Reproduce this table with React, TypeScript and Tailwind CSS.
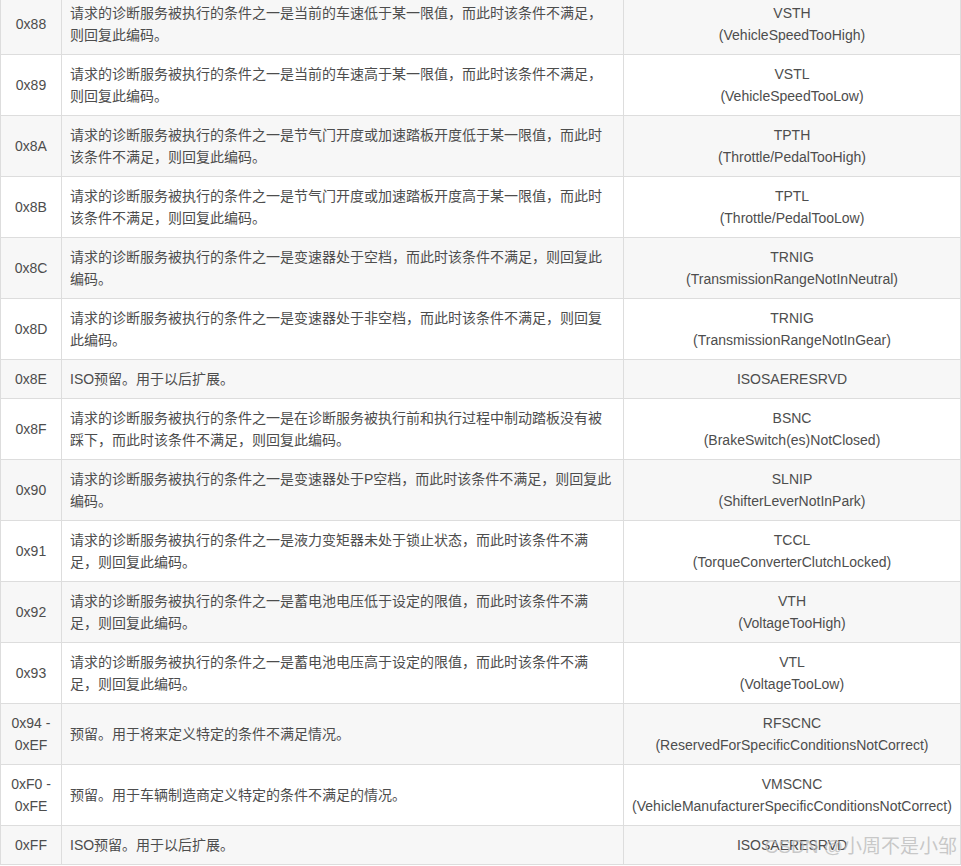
import React from 'react';

// NRC rows: code, description, mnemonic, full name
interface NrcRow {
  code: string;
  desc: string;
  short: string;
  long?: string;
}

const rows: NrcRow[] = [
  { code: '0x88', desc: '请求的诊断服务被执行的条件之一是当前的车速低于某一限值，而此时该条件不满足，则回复此编码。', short: 'VSTH', long: '(VehicleSpeedTooHigh)' },
  { code: '0x89', desc: '请求的诊断服务被执行的条件之一是当前的车速高于某一限值，而此时该条件不满足，则回复此编码。', short: 'VSTL', long: '(VehicleSpeedTooLow)' },
  { code: '0x8A', desc: '请求的诊断服务被执行的条件之一是节气门开度或加速踏板开度低于某一限值，而此时该条件不满足，则回复此编码。', short: 'TPTH', long: '(Throttle/PedalTooHigh)' },
  { code: '0x8B', desc: '请求的诊断服务被执行的条件之一是节气门开度或加速踏板开度高于某一限值，而此时该条件不满足，则回复此编码。', short: 'TPTL', long: '(Throttle/PedalTooLow)' },
  { code: '0x8C', desc: '请求的诊断服务被执行的条件之一是变速器处于空档，而此时该条件不满足，则回复此编码。', short: 'TRNIG', long: '(TransmissionRangeNotInNeutral)' },
  { code: '0x8D', desc: '请求的诊断服务被执行的条件之一是变速器处于非空档，而此时该条件不满足，则回复此编码。', short: 'TRNIG', long: '(TransmissionRangeNotInGear)' },
  { code: '0x8E', desc: 'ISO预留。用于以后扩展。', short: 'ISOSAERESRVD' },
  { code: '0x8F', desc: '请求的诊断服务被执行的条件之一是在诊断服务被执行前和执行过程中制动踏板没有被踩下，而此时该条件不满足，则回复此编码。', short: 'BSNC', long: '(BrakeSwitch(es)NotClosed)' },
  { code: '0x90', desc: '请求的诊断服务被执行的条件之一是变速器处于P空档，而此时该条件不满足，则回复此编码。', short: 'SLNIP', long: '(ShifterLeverNotInPark)' },
  { code: '0x91', desc: '请求的诊断服务被执行的条件之一是液力变矩器未处于锁止状态，而此时该条件不满足，则回复此编码。', short: 'TCCL', long: '(TorqueConverterClutchLocked)' },
  { code: '0x92', desc: '请求的诊断服务被执行的条件之一是蓄电池电压低于设定的限值，而此时该条件不满足，则回复此编码。', short: 'VTH', long: '(VoltageTooHigh)' },
  { code: '0x93', desc: '请求的诊断服务被执行的条件之一是蓄电池电压高于设定的限值，而此时该条件不满足，则回复此编码。', short: 'VTL', long: '(VoltageTooLow)' },
  { code: '0x94 - 0xEF', desc: '预留。用于将来定义特定的条件不满足情况。', short: 'RFSCNC', long: '(ReservedForSpecificConditionsNotCorrect)' },
  { code: '0xF0 - 0xFE', desc: '预留。用于车辆制造商定义特定的条件不满足的情况。', short: 'VMSCNC', long: '(VehicleManufacturerSpecificConditionsNotCorrect)' },
  { code: '0xFF', desc: 'ISO预留。用于以后扩展。', short: 'ISOSAERESRVD' },
];

export default function App() {
  return (
    <div
      className="relative h-[866px] w-[961px] overflow-hidden bg-white text-[14px] leading-[22px] text-[#4d4d4d]"
      style={{ fontFamily: '"Liberation Sans", "Noto Sans CJK SC", sans-serif' }}
    >
      <table className="-mt-[7px] w-[961px] table-fixed border-collapse">
        <colgroup>
          <col className="w-[61px]" />
          <col className="w-[562px]" />
          <col />
        </colgroup>
        <tbody>
          {rows.map((r, i) => (
            <tr key={r.code} className={i % 2 === 0 ? 'bg-[#f7f7f7]' : 'bg-white'}>
              <td className="border border-[#dddddd] px-2 py-2 text-center align-middle">{r.code}</td>
              <td className="border border-[#dddddd] px-2 py-2 align-middle">{r.desc}</td>
              <td className="border border-[#dddddd] px-1 py-2 text-center align-middle">
                <div>{r.short}</div>
                {r.long && <div>{r.long}</div>}
              </td>
            </tr>
          ))}
        </tbody>
      </table>

      {/* watermark */}
      <div className="pointer-events-none absolute right-[4px] top-[833px] text-[19px] leading-[28px] text-[#bcbcbc]/80">
        CSDN @小周不是小邹
      </div>
    </div>
  );
}
